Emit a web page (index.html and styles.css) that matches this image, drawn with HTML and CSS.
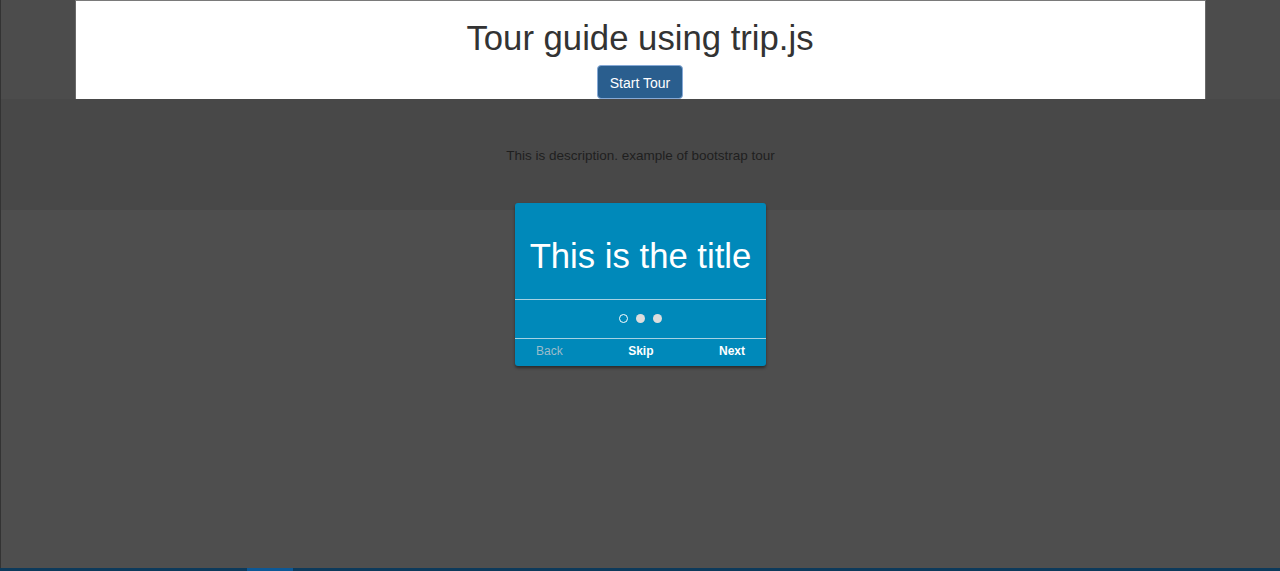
FILE: index.html
```html
<!DOCTYPE html>
<html lang="en">
<head>
    <meta charset="UTF-8">
    <meta name="viewport" content="width=device-width, initial-scale=1.0">
    <title>Tour guide using trip.js</title>
    <link rel="stylesheet" href="styles.css">
</head>
<body>

    <div class="page">
        <header class="top-band">
            <div class="hero">
                <h1>Tour guide using trip.js</h1>
                <button class="start-btn">Start Tour</button>
            </div>
        </header>

        <section class="jumbo">
            <p>This is description. example of bootstrap tour</p>
        </section>

        <main class="stage"></main>

        <!-- trip.js popup, sits over the page -->
        <div class="trip-block">
            <div class="trip-title">This is the title</div>
            <div class="trip-dots">
                <span class="dot current"></span>
                <span class="dot"></span>
                <span class="dot"></span>
            </div>
            <div class="trip-nav">
                <span class="trip-back">Back</span>
                <span class="trip-skip">Skip</span>
                <span class="trip-next">Next</span>
            </div>
        </div>

        <footer class="taskbar">
            <span class="taskbar-active"></span>
        </footer>
    </div>

</body>
</html>
```

FILE: styles.css
```css
body {
    margin: 0;
    font-family: "Liberation Sans", Arial, sans-serif;
    font-size: 14px;
    background: #4d4d4d;
    overflow: hidden;
}

.page {
    position: relative;
    height: 571px;
    display: flex;
    flex-direction: column;
    border-left: 1px solid #333333;
}

.top-band {
    height: 99px;
    background: #4c4c4c;
    display: flex;
    justify-content: center;
    padding-right: 1px;
}

.hero {
    width: 1129px;
    height: 98px;
    background: #ffffff;
    border-top: 1px solid #7a7a7a;
    border-left: 1px solid #6a6a6a;
    border-right: 1px solid #6a6a6a;
    text-align: center;
    overflow: hidden;
}

.hero h1 {
    margin: 17px 0 7px;
    font-size: 34.7px;
    line-height: 40px;
    font-weight: normal;
    color: #333333;
}

.start-btn {
    font-family: inherit;
    font-size: 14px;
    line-height: 20px;
    padding: 7px 12px 5px;
    height: 34px;
    color: #ffffff;
    background: #2a5e8e;
    border: 1px solid #86a9d6;
    border-radius: 4px;
}

.jumbo {
    height: 111px;
    background: #484848;
    text-align: center;
}

.jumbo p {
    margin: 0;
    padding-top: 47px;
    font-size: 13.5px;
    line-height: 20px;
    color: #1f1f1f;
}

.stage {
    flex: 1;
    background: #4e4e4e;
}

.trip-block {
    position: absolute;
    left: 514px;
    top: 203px;
    width: 251px;
    background: #0089ba;
    border-radius: 3px;
    box-shadow: 0 2px 3px rgba(0, 0, 0, 0.45);
    color: #ffffff;
    text-align: center;
}

.trip-title {
    height: 97px;
    font-size: 34.7px;
    line-height: 40px;
    padding-top: 33px;
    box-sizing: border-box;
    border-bottom: 1px solid #a6d2e3;
}

.trip-dots {
    height: 39px;
    padding-bottom: 2px;
    box-sizing: border-box;
    display: flex;
    align-items: center;
    justify-content: center;
    gap: 8px;
    border-bottom: 1px solid #a6d2e3;
}

.dot {
    width: 9px;
    height: 9px;
    border-radius: 50%;
    background: #dddddd;
}

.dot.current {
    width: 7px;
    height: 7px;
    background: transparent;
    border: 1.5px solid #ffffff;
}

.trip-nav {
    height: 27px;
    padding: 0 21px 3px;
    display: flex;
    align-items: center;
    justify-content: space-between;
    font-size: 12px;
    font-weight: bold;
    box-sizing: border-box;
}

.trip-back {
    font-weight: normal;
    color: #9bbccb;
}

.taskbar {
    height: 3px;
    background: #0d3a5b;
    margin-left: -1px;
    display: flex;
}

.taskbar-active {
    margin-left: 247px;
    width: 46px;
    background: #0c5896;
}
```
